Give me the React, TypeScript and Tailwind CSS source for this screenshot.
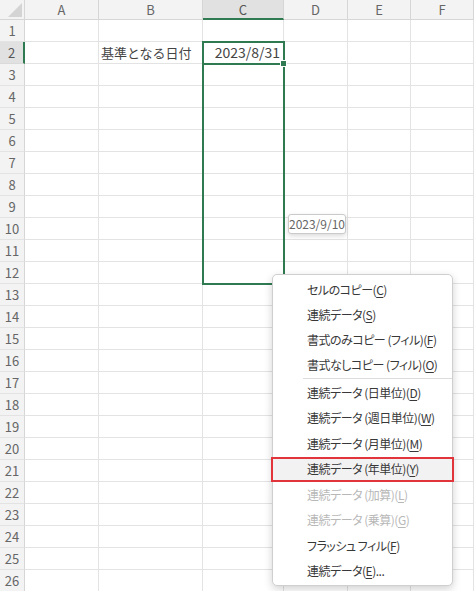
import React from "react";

const COLS = ["A", "B", "C", "D", "E", "F"];
const ROWS = Array.from({ length: 26 }, (_, i) => i + 1);

type Item = { pre: string; key: string; post: string; disabled?: boolean; hl?: boolean };

const TOP: Item[] = [
  { pre: "セルのコピー(", key: "C", post: ")" },
  { pre: "連続データ(", key: "S", post: ")" },
  { pre: "書式のみコピー (フィル)(", key: "F", post: ")" },
  { pre: "書式なしコピー (フィル)(", key: "O", post: ")" },
];
const BOTTOM: Item[] = [
  { pre: "連続データ (日単位)(", key: "D", post: ")" },
  { pre: "連続データ (週日単位)(", key: "W", post: ")" },
  { pre: "連続データ (月単位)(", key: "M", post: ")" },
  { pre: "連続データ (年単位)(", key: "Y", post: ")", hl: true },
  { pre: "連続データ (加算)(", key: "L", post: ")", disabled: true },
  { pre: "連続データ (乗算)(", key: "G", post: ")", disabled: true },
  { pre: "フラッシュ フィル(", key: "F", post: ")" },
  { pre: "連続データ(", key: "E", post: ")..." },
];

function MenuItem({ it, h }: { it: Item; h: string }) {
  return (
    <div
      className={
        "flex items-center text-[12px] tracking-[-0.5px] [font-feature-settings:'palt'] whitespace-nowrap " +
        h +
        (it.disabled ? " text-[#b8b8b8]" : " text-[#383838]") +
        (it.hl
          ? " bg-[#f2f2f2] border-2 border-[#e2343b] -mx-[2px] pl-[34px]"
          : " pl-[34px]")
      }
    >
      <span>
        {it.pre}
        <span className="underline underline-offset-2">{it.key}</span>
        {it.post}
      </span>
    </div>
  );
}

export default function App() {
  return (
    <div className="relative w-[474px] h-[591px] overflow-hidden bg-white font-['Noto_Sans_CJK_JP',sans-serif]">
      <div className="grid grid-cols-[25px_74px_104px_81px_64px_63px_63px]">
        {/* header row */}
        <div className="relative h-[20px] bg-[#f3f3f3] border-b border-r border-[#d6d6d6]">
          <svg className="absolute right-[2px] bottom-[2px]" width="14" height="14" viewBox="0 0 14 14">
            <polygon points="14,0 14,14 0,14" fill="#d4d4d4" />
          </svg>
        </div>
        {COLS.map((c) => (
          <div
            key={c}
            className={
              "h-[20px] flex items-center justify-center text-[13px] leading-none " +
              (c === "C"
                ? "bg-[#e1e1e1] border-b-2 border-b-[#2f7a50] border-r border-r-[#d6d6d6] text-[#555]"
                : "bg-[#f3f3f3] border-b border-r border-[#d6d6d6] text-[#666]")
            }
          >
            {c}
          </div>
        ))}
        {ROWS.map((r) => (
          <React.Fragment key={r}>
            <div
              className={
                "h-[22px] flex items-center justify-center text-[13px] leading-none border-b " +
                (r === 2
                  ? "bg-[#e1e1e1] border-b-[#dadada] border-r-2 border-r-[#2f7a50] text-[#555]"
                  : "bg-[#f3f3f3] border-b-[#e3e3e3] border-r border-r-[#d6d6d6] text-[#666]")
              }
            >
              {r}
            </div>
            {COLS.map((c) => (
              <div
                key={c}
                className="h-[22px] border-b border-r border-[#e3e3e3] flex items-center text-[#444]"
              >
                {r === 2 && c === "B" && (
                  <span className="pl-[2px] text-[13px] whitespace-nowrap">基準となる日付</span>
                )}
                {r === 2 && c === "C" && (
                  <span className="ml-auto pr-[3px] text-[14px] whitespace-nowrap">2023/8/31</span>
                )}
              </div>
            ))}
          </React.Fragment>
        ))}
      </div>

      {/* selection range C2:C12 */}
      <div className="absolute left-[202px] top-[41px] w-[83px] h-[244px] border-2 border-[#2f7a50] pointer-events-none" />
      {/* active cell bottom edge */}
      <div className="absolute left-[202px] top-[63px] w-[83px] h-[2px] bg-[#2f7a50]" />
      {/* fill handle */}
      <div className="absolute left-[280px] top-[60px] w-[5px] h-[5px] bg-[#2f7a50] border border-white box-content" />

      {/* tooltip */}
      <div className="absolute left-[288px] top-[214px] w-[58px] h-[20px] bg-white border border-[#cacaca] rounded-[3px] shadow-[0_2px_5px_rgba(0,0,0,0.15)] flex items-center justify-center text-[12px] text-[#666]">
        2023/9/10
      </div>

      {/* context menu */}
      <div className="absolute left-[272px] top-[274px] w-[181px] bg-white border border-[#cfcfcf] rounded-[5px] shadow-[0_3px_8px_rgba(0,0,0,0.18)] pt-[2px] pb-[1px]">
        {TOP.map((it, i) => (
          <MenuItem key={i} it={it} h="h-[25px]" />
        ))}
        <div className="h-[3px] flex items-start pl-[30px]">
          <div className="w-full h-px bg-[#dcdcdc] mt-px" />
        </div>
        {BOTTOM.map((it, i) => (
          <MenuItem key={i} it={it} h="h-[25.5px]" />
        ))}
      </div>
    </div>
  );
}
